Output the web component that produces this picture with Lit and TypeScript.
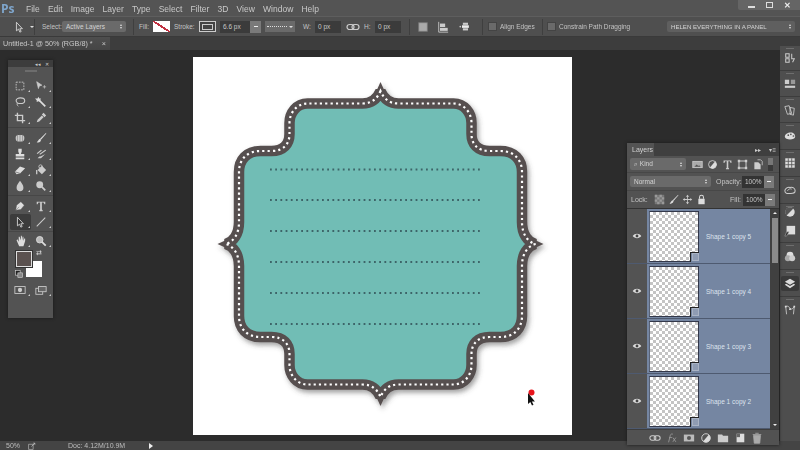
import { LitElement, html, css, svg } from "lit";
import { customElement } from "lit/decorators.js";

type Seg = number[];
const quad: Seg[] = [
  [-3, -146, -8, -140.5, -18, -140.5],
  [-37, -140.5, -56, -140.5, -73, -140.5],
  [-84, -140.5, -91, -131, -91, -121],
  [-91, -116, -91, -113, -91, -110],
  [-91, -100, -97, -93, -109, -93],
  [-113, -93, -117, -93, -120, -93],
  [-134, -93, -141.5, -84, -141.5, -72],
  [-141.5, -55, -141.5, -37, -141.5, -22],
  [-141.5, -10, -147, -2, -155, 0],
];
const start = [0, -153];
const CX = 187.5;
const CY = 187;
function shapePath(): string {
  const forward = (sx: number, sy: number) =>
    quad.map((s) => [s[0] * sx, s[1] * sy, s[2] * sx, s[3] * sy, s[4] * sx, s[5] * sy]);
  const backward = (sx: number, sy: number) => {
    const pts: number[][] = [start, ...quad.map((s) => [s[4], s[5]])];
    const out: number[][] = [];
    for (let i = quad.length - 1; i >= 0; i--) {
      const s = quad[i];
      out.push([s[2] * sx, s[3] * sy, s[0] * sx, s[1] * sy, pts[i][0] * sx, pts[i][1] * sy]);
    }
    return out;
  };
  const all = [...forward(1, 1), ...backward(1, -1), ...forward(-1, -1), ...backward(-1, 1)];
  let d = `M${CX + start[0]} ${CY + start[1]}`;
  for (const s of all) {
    d += `C${CX + s[0]} ${CY + s[1]} ${CX + s[2]} ${CY + s[3]} ${CX + s[4]} ${CY + s[5]}`;
  }
  return d + "Z";
}
const tips = [
  `M${CX - 5.5} ${CY - 150}L${CX} ${CY - 162}L${CX + 5.5} ${CY - 150}Z`,
  `M${CX - 5.5} ${CY + 150}L${CX} ${CY + 162}L${CX + 5.5} ${CY + 150}Z`,
  `M${CX - 151} ${CY - 5.5}L${CX - 163} ${CY}L${CX - 151} ${CY + 5.5}Z`,
  `M${CX + 151} ${CY - 5.5}L${CX + 163} ${CY}L${CX + 151} ${CY + 5.5}Z`,
];

const icons: Record<string, unknown> = {
  marquee: svg`<rect x="2.5" y="2.5" width="9" height="9" fill="none" stroke="#ccc" stroke-dasharray="2 1.2"/>`,
  move: svg`<path d="M2 2l6 4-3 1 -1 3zM9 8h4M11 6v4" fill="#ccc" stroke="#ccc" stroke-width=".8"/>`,
  lasso: svg`<ellipse cx="7.5" cy="5.5" rx="5" ry="3.3" fill="none" stroke="#ccc" stroke-width="1.3"/><path d="M4 8c-1 2 0 3 1 4" fill="none" stroke="#ccc"/>`,
  wand: svg`<path d="M5 5l7 7" stroke="#ddd" stroke-width="2"/><path d="M4 1l1 2 2 0-1 2 1 2-3-1-2 1 0-2-2-2 3 0z" fill="#ddd"/>`,
  crop: svg`<path d="M4 1v9h9M1 4h9v9" fill="none" stroke="#ccc" stroke-width="1.6"/>`,
  dropper: svg`<path d="M2 12l1-3 5-5 2 2-5 5zM8 3l2-2 3 3-2 2z" fill="#ccc"/>`,
  heal: svg`<rect x="2" y="3.5" width="10" height="7.5" rx="3" fill="#ccc"/><path d="M4 3v8M7 3v8M10 3v8" stroke="#777" stroke-width=".7"/>`,
  brush: svg`<path d="M13 1L6 8l1 1 6-7z" fill="#ddd"/><path d="M6 8c-2 0-2 3-4 4 3 1 5-1 5-3z" fill="#ddd"/>`,
  stamp: svg`<path d="M5 1h4v3L8 7h4v3H2V7h4L5 4zM2 11h10v2H2z" fill="#ddd"/>`,
  hbrush: svg`<path d="M12 2L5 7l1 1 7-5zM2 6l5-4 1 1-5 4zM5 10c2 0 7-3 7-3l-5 5H3z" fill="#ccc"/>`,
  eraser: svg`<path d="M1 9l6-6 6 2-6 6-4 1z" fill="#ddd"/><path d="M1 9l6 2" stroke="#777"/>`,
  bucket: svg`<path d="M3 7l5-5 5 5-5 5z" fill="#ccc"/><path d="M2 7v5" stroke="#ccc" stroke-width="1.5"/><circle cx="6.5" cy="3" r="2" fill="none" stroke="#ccc"/>`,
  drop: svg`<path d="M7 1c2 3 4 5 4 8a4 4 0 01-8 0c0-3 2-5 4-8z" fill="#ccc"/>`,
  smudge: svg`<circle cx="5.5" cy="5.5" r="4" fill="#ccc"/><path d="M8 8l4 4" stroke="#ccc" stroke-width="2"/>`,
  pen: svg`<path d="M2 12l1-6 5-4 4 4-4 5zM2 12l4-4" fill="#ddd" stroke="#555" stroke-width=".5"/>`,
  type: svg`<path d="M2 2h10v3h-1l-1-2H8v8l1 1v1H5v-1l1-1V3H4L3 5H2z" fill="#ccc"/>`,
  select: svg`<path d="M4 1.5v10l2.5-2 1.5 3.5 1.5-.7L8 9h3z" fill="#333" stroke="#ddd"/>`,
  line: svg`<path d="M2 12L12 2" stroke="#ccc" stroke-width="1.2"/>`,
  hand: svg`<path d="M3 6l3 7h5l2-6V4l-1 0-1 3V2H10v4L9 1H8v5L6.5 2H5.5v6L4 5z" fill="#ddd"/>`,
  zoom: svg`<circle cx="5.5" cy="5.5" r="3.8" fill="#bbb" stroke="#ddd"/><path d="M8 8l4.5 4.5" stroke="#ddd" stroke-width="2"/>`,
  mask: svg`<rect x="1" y="3" width="12" height="8" fill="none" stroke="#ccc"/><circle cx="7" cy="7" r="2.5" fill="#ccc"/>`,
  screen: svg`<rect x="1" y="5" width="8" height="7" fill="none" stroke="#ccc"/><rect x="4" y="3" width="9" height="6" fill="#666" stroke="#ccc"/>`,
  link: svg`<rect x="1" y="4.5" width="7" height="5" rx="2.5" fill="none" stroke="#ccc" stroke-width="1.2"/><rect x="6" y="4.5" width="7" height="5" rx="2.5" fill="none" stroke="#ccc" stroke-width="1.2"/>`,
  fx: svg`<path d="M3 12l2-8c.3-1.5 1.5-2 3-1.5M3.5 6.5H7M8 6.5l3.5 5M11.5 6.5L8 11.5" fill="none" stroke="#999"/>`,
  addmask: svg`<rect x="1" y="3" width="12" height="8" fill="#bbb"/><circle cx="7" cy="7" r="2.4" fill="#555"/>`,
  adjust: svg`<circle cx="7" cy="7" r="5" fill="#555" stroke="#ddd"/><path d="M7 2a5 5 0 010 10z" fill="#ddd" transform="rotate(40 7 7)"/>`,
  folder: svg`<path d="M1 3h5l1 1.5h6V12H1z" fill="#ccc"/>`,
  newl: svg`<path d="M3 2h9v10H3z" fill="#ddd"/><path d="M3 2h4v4H3z" fill="#666"/>`,
  trash: svg`<path d="M3 4h8l-.8 9H3.8zM2 3h10M5 1.5h4" fill="#aaa" stroke="#aaa"/>`,
  eye: svg`<path d="M1 7c3-4 9-4 12 0-3 4-9 4-12 0z" fill="#ddd"/><circle cx="7" cy="7" r="2" fill="#444"/>`,
  filterimg: svg`<rect x="1" y="3" width="12" height="8" fill="#aaa" stroke="#ccc"/><path d="M3 10l3-3 2 2 1-1 2 2z" fill="#555"/>`,
  t: svg`<path d="M2 2h10v3h-1l-1-2H8v8l1 1v1H5v-1l1-1V3H4L3 5H2z" fill="#ccc"/>`,
  frame: svg`<path d="M2.5 2.5h9v9h-9z" fill="none" stroke="#ccc" stroke-width="1.3"/><path d="M1 1h3v3H1zM10 1h3v3h-3zM1 10h3v3H1zM10 10h3v3h-3z" fill="#ccc"/>`,
  smart: svg`<path d="M3 4h5l3 3v6H3z" fill="#ccc"/><path d="M7 1h4l2 2v5" fill="none" stroke="#ccc"/>`,
  checker: svg`<rect x="1" y="1" width="12" height="12" fill="#777"/><path d="M1 1h3v3H1zM7 1h3v3H7zM4 4h3v3H4zM10 4h3v3h-3zM1 7h3v3H1zM7 7h3v3H7zM4 10h3v3H4zM10 10h3v3h-3z" fill="#999"/>`,
  arrows: svg`<path d="M7 1l2 2.5H5zM7 13l-2-2.5h4zM1 7l2.5-2v4zM13 7l-2.5 2V5zM6.5 3h1v8h-1zM3 6.5h8v1H3z" fill="#ccc"/>`,
  lock: svg`<rect x="3" y="6" width="8" height="7" fill="#ddd"/><path d="M4.5 6V4a2.5 2.5 0 015 0v2" fill="none" stroke="#ddd" stroke-width="1.3"/>`,
  align1: svg`<rect x="2" y="2" width="10" height="10" fill="#aaa" stroke="#777"/>`,
  align2: svg`<path d="M2 1v12h11" fill="none" stroke="#ccc"/><rect x="3.5" y="3" width="6" height="4" fill="#ccc"/><rect x="3.5" y="8" width="9" height="3.5" fill="#ccc"/>`,
  arrange: svg`<rect x="4.5" y="2" width="6" height="2.5" fill="#ccc"/><rect x="3.5" y="5" width="8" height="3" fill="#eee"/><rect x="4.5" y="8.5" width="6" height="2.5" fill="#ccc"/><circle cx="1.5" cy="6.5" r="1" fill="#ccc"/>`,
  history: svg`<path d="M2 2h4v4H2zM2 8h4v4H2zM9 2v6h3l-2 4" fill="none" stroke="#ccc" stroke-width="1.2"/>`,
  actions: svg`<rect x="1" y="2" width="5" height="5" fill="#ccc"/><rect x="8" y="2" width="5" height="5" fill="#999"/><rect x="1" y="9" width="12" height="2.5" fill="#ccc"/>`,
  cards: svg`<path d="M1 3l5-1 3 9-5 1z M7 4l5 1-1 8-4-1z" fill="none" stroke="#ccc"/>`,
  palette: svg`<path d="M1 8c0-3 3-5 7-5s5 3 5 5-3 3-6 3-6-1-6-3z" fill="#ddd"/><circle cx="5" cy="6" r="1" fill="#555"/><circle cx="8" cy="5" r="1" fill="#555"/><circle cx="11" cy="7" r="1" fill="#555"/>`,
  grid: svg`<rect x="1.5" y="1.5" width="11" height="11" fill="#ddd"/><path d="M5 1.5v11M9 1.5v11M1.5 5h11M1.5 9h11" stroke="#555"/>`,
  cloud: svg`<path d="M1 8c0-3 4-5 6-4 3-1 6 1 6 4s-2 3-5 3-7 1-7-3z" fill="none" stroke="#ccc" stroke-width="1.2"/><path d="M4 8c1-2 3-3 5-2" fill="none" stroke="#ccc"/>`,
  halfc: svg`<circle cx="7" cy="7" r="5.5" fill="#ddd"/><path d="M3 11A5.5 5.5 0 0111 3z" fill="#555"/>`,
  style: svg`<rect x="3" y="1" width="10" height="10" fill="#ddd"/><path d="M1 13l2-5h3l-3 5z" fill="#333" stroke="#ccc" stroke-width=".5"/>`,
  venn: svg`<circle cx="7" cy="6" r="4" fill="#ddd"/><circle cx="4.5" cy="9.5" r="3.5" fill="#aaa"/><circle cx="9.5" cy="9.5" r="3.5" fill="#ccc"/>`,
  layers: svg`<path d="M7 2l6 3.5L7 9 1 5.5z" fill="#ddd"/><path d="M2.5 8L7 10.5 11.5 8l1.5 1L7 13 1 9z" fill="#ddd"/>`,
  paths: svg`<path d="M2 3c5-3 5 8 10 0M2 3l1 9M12 3l-1 9" fill="none" stroke="#ccc"/><rect x="1" y="2" width="2" height="2" fill="#ddd"/><rect x="11" y="2" width="2" height="2" fill="#ddd"/><rect x="6" y="5" width="2" height="2" fill="#ddd"/>`,
  pointer: svg`<path d="M4 1.5v10l2.5-2 1.5 3.5 1.5-.7L8 9h3z" fill="#555" stroke="#ddd"/>`,
};
const ic = (n: string) => html`<svg class="ic" viewBox="0 0 14 14">${icons[n]}</svg>`;

const menus = ["File", "Edit", "Image", "Layer", "Type", "Select", "Filter", "3D", "View", "Window", "Help"];
const toolGroups = [
  { items: ["marquee", "move", "lasso", "wand", "crop", "dropper"], cls: "first" },
  { items: ["heal", "brush", "stamp", "hbrush", "eraser", "bucket", "drop", "smudge"], cls: "" },
  { items: ["pen", "type", "select", "line"], cls: "" },
  { items: ["hand", "zoom"], cls: "last" },
];
const dock: [string, number, boolean?][] = [
  ["history", 25], ["actions", 26], ["cards", 26], ["palette", 27], ["grid", 27],
  ["cloud", 27], ["halfc", 17], ["style", 22], ["venn", 27], ["layers", 27, true], ["paths", 27],
];
const layers = ["Shape 1 copy 5", "Shape 1 copy 4", "Shape 1 copy 3", "Shape 1 copy 2"];
const lineYs = [112.5, 143, 174, 205, 236, 267];

@customElement("app-root")
export class AppRoot extends LitElement {
  static styles = css`
    :host { display: block; width: 800px; height: 450px; overflow: hidden; font-family: "Liberation Sans", Arial, sans-serif; color: #c4c4c4; background: #2c2c2c; }
    * { box-sizing: border-box; }
    .app { width: 800px; height: 450px; display: grid; grid-template-rows: 16px 21px 13px 1fr 9px; filter: blur(.45px); }
    .ic { width: 12px; height: 12px; display: block; flex: none; }

    .menubar { display: flex; align-items: center; background: #545454; position: relative; padding-top: 1px; }
    .ps { width: 24px; padding-left: 1px; font: bold 12px "Open Sans", sans-serif; color: #7fa6cc; }
    .menus { display: flex; gap: 8.2px; font-size: 8.5px; color: #c8c8c8; padding-left: 2px; }
    .winbtns { position: absolute; right: 0; top: 0; width: 62px; height: 10px; background: #656565; display: flex; align-items: center; justify-content: space-around; padding: 0 4px; border-radius: 0 0 0 2px; }
    .wmin { width: 7px; height: 2px; background: #ddd; margin-top: 3px; }
    .wres { width: 7px; height: 6px; border: 1.2px solid #ddd; }
    .wx { font: bold 8px "Liberation Sans", sans-serif; color: #eee; }

    .options { display: flex; align-items: center; background: #4f4f4f; border-top: 1px solid #5e5e5e; border-bottom: 1px solid #3a3a3a; font-size: 6.5px; color: #c4c4c4; padding-left: 13px; }
    .opt-tool { display: flex; width: 21px; align-items: center; gap: 5px; flex: none; }
    .caret { width: 0; height: 0; border-left: 2px solid transparent; border-right: 2px solid transparent; border-top: 2.5px solid #ddd; flex: none; }
    .sep { width: 1px; height: 16px; background: #3f3f3f; flex: none; }
    .select { height: 11px; background: #6a6a6a; border-radius: 2px; display: flex; align-items: center; justify-content: space-between; padding: 0 4px; font-size: 6.5px; color: #d4d4d4; flex: none; white-space: nowrap; }
    .updown { display: flex; flex-direction: column; gap: 1px; }
    .updown i { display: block; width: 0; height: 0; border-left: 1.5px solid transparent; border-right: 1.5px solid transparent; }
    .updown i:first-child { border-bottom: 2px solid #ddd; }
    .updown i:last-child { border-top: 2px solid #ddd; }
    .lb { flex: none; white-space: nowrap; }
    .s1 { width: 64px; margin-left: 1px; }
    .m3 { margin-left: 3px; } .m4 { margin-left: 4px; } .m5 { margin-left: 5px; }
    .m7 { margin-left: 7px; } .m8 { margin-left: 8px; } .m9 { margin-left: 9px; } .m10 { margin-left: 10px; } .m11 { margin-left: 11px; }
    .w19 { width: 19px; } .w10 { width: 10px; } .w21 { width: 21px; } .w7 { width: 7px; } .w33 { width: 33px; }
    .fill { width: 17px; height: 11px; background: linear-gradient(to top right, #fff 45%, #c03040 45%, #c03040 55%, #fff 55%); flex: none; }
    .stroke { width: 17px; height: 11px; border: 1px solid #ccc; background: #444; display: grid; place-items: center; flex: none; }
    .stroke i { display: block; width: 11px; height: 6px; border: 1.2px solid #ccc; }
    .input { background: #3b3b3b; height: 12px; display: flex; align-items: center; padding-left: 3px; font-size: 6.5px; color: #c8c8c8; flex: none; }
    .i-stroke { width: 30px; }
    .i-wh { width: 26px; }
    .minus { width: 11px; height: 12px; background: #7a7a7a; display: grid; place-items: center; flex: none; }
    .minus i { display: block; width: 4px; height: 1px; background: #eee; }
    .dash { width: 30px; height: 11px; background: #6a6a6a; display: flex; align-items: center; gap: 2px; padding: 0 2px; flex: none; }
    .dash b { flex: 1; border-top: 1px dotted #ddd; }
    .box { width: 9px; height: 9px; background: #6a6a6a; border: 1px solid #444; flex: none; }
    .grow { flex: 1; }
    .preset { width: 128px; margin-right: 5px; font-size: 6.1px; background: #5f5f5f; }
    .w-link { width: 14px; height: 14px; }

    .tabs { background: #3d3d3d; display: flex; }
    .tab { width: 110px; background: linear-gradient(#4e4e4e, #454545); font-size: 7.2px; display: flex; align-items: center; justify-content: space-between; padding: 0 4px 0 3px; color: #c8c8c8; }

    .work { position: relative; background: #2c2c2c; }
    .canvas { position: absolute; left: 193px; top: 7px; width: 379px; height: 378px; background: #fff; }
    .canvas svg { display: block; width: 379px; height: 378px; overflow: visible; }

    .tools { position: absolute; left: 8px; top: 10px; width: 45px; height: 258px; background: #535353; box-shadow: 0 0 3px #1a1a1a; display: flex; flex-direction: column; }
    .thead { height: 7px; background: #3c3c3c; display: flex; justify-content: flex-end; align-items: center; gap: 4px; padding-right: 4px; font-size: 5px; color: #ccc; flex: none; }
    .grip { width: 12px; height: 2px; background: #6d6d6d; align-self: center; margin: 3px 0 0; flex: none; }
    .tgrid { display: grid; grid-template-columns: 21px 21px; grid-auto-rows: 16px; padding: 2px 1px 1px 1px; border-bottom: 1px solid #474747; justify-content: center; flex: none; }
    .tgrid.first { margin-top: 6px; padding-top: 0; }
    .tgrid.last { border-bottom: 0; padding-top: 1px; }
    .tool { position: relative; display: grid; place-items: center; }
    .tool::after { content: ""; position: absolute; right: 1px; bottom: 2px; border-left: 2px solid transparent; border-bottom: 2px solid #ccc; }
    .tool.active { background: #3c3c3c; border-radius: 2px; }
    .swatches { position: relative; height: 31px; margin-top: 1px; flex: none; }
    .fg { position: absolute; left: 8px; top: 0; width: 16px; height: 16px; background: #5b5250; border: 1px solid #ddd; box-shadow: 0 0 0 1px #333; z-index: 1; }
    .bg { position: absolute; left: 18px; top: 10px; width: 16px; height: 16px; background: #fff; }
    .sw-small { position: absolute; left: 7px; top: 19px; width: 8px; height: 8px; }
    .sw-arrow { position: absolute; left: 28px; top: -2px; font: 7px "DejaVu Sans", sans-serif; color: #ddd; }
    .maskrow { display: grid; grid-template-columns: 21px 21px; justify-content: center; height: 16px; flex: none; }

    .dock { position: absolute; left: 780px; top: -5px; width: 20px; height: 396px; background: #4e4e4e; display: flex; flex-direction: column; }
    .dgroup { border-top: 1px solid #3d3d3d; display: flex; align-items: center; justify-content: center; flex: none; position: relative; }
    .dgroup::before { content: ""; position: absolute; left: 6px; right: 6px; top: 2px; height: 1px; background: #6e6e6e; }
    .dgroup.nohead { border-top: 0; }
    .dgroup.nohead::before { display: none; }
    .dgroup.active span { background: #3a3a3a; border-radius: 2px; width: 18px; height: 15px; display: grid; place-items: center; }

    .layers { position: absolute; left: 627px; top: 93px; width: 152px; height: 302px; background: #525252; box-shadow: 0 0 3px #1a1a1a; display: flex; flex-direction: column; font-size: 7px; }
    .ltabs { height: 13px; background: #3f3f3f; display: flex; justify-content: space-between; align-items: stretch; flex: none; }
    .ltab { background: #535353; width: 27px; padding-left: 5px; font-size: 7px; color: #d0d0d0; display: flex; align-items: center; }
    .lmenu { display: flex; align-items: center; gap: 8px; padding-right: 3px; font-size: 6px; color: #ccc; }
    .lrow { display: flex; align-items: center; padding-left: 3px; flex: none; }
    .r-kind { height: 17px; border-bottom: 1px solid #474747; }
    .r-mode { height: 18px; border-bottom: 1px solid #474747; }
    .r-lock { height: 18px; border-bottom: 1px solid #333; }
    .k-sel { width: 56px; height: 12px; }
    .k-icons { display: flex; gap: 4px; margin-left: 6px; }
    .k-icons .ic { width: 11px; height: 11px; }
    .mini { width: 5px; height: 13px; margin-left: 5px; background: linear-gradient(#777 50%, #3a3a3a 50%); flex: none; }
    .n-sel { width: 81px; height: 11px; }
    .op-l { margin-left: 5px; width: 26px; flex: none; }
    .op-i { width: 22px; height: 12px; font-size: 6.5px; background: #333; }
    .op-m { width: 10px; }
    .lock-l { width: 24px; padding-left: 1px; flex: none; }
    .lock-i { display: flex; gap: 3px; }
    .lock-i .ic { width: 11px; height: 11px; }
    .fill-l { margin-left: auto; width: 13px; flex: none; }
    .r-lock .op-m { margin-right: 4px; }

    .list { height: 220px; display: grid; grid-template-columns: 1fr 9px; flex: none; }
    .rows { display: flex; flex-direction: column; }
    .lyr { height: 55px; display: grid; grid-template-columns: 20px 1fr; flex: none; border-bottom: 1.5px solid #4e5a70; }
    .eye { display: grid; place-items: center; background: #535353; }
    .eye .ic { width: 10px; height: 10px; }
    .lbody { background: #7586a2; display: flex; align-items: center; gap: 7px; padding-left: 2px; color: #dde4ee; font-size: 6.5px; }
    .thumb { position: relative; width: 50px; height: 51px; flex: none; background-color: #fff; background-image: conic-gradient(#c4c4c4 25%, #fff 25% 50%, #c4c4c4 50% 75%, #fff 75%); background-size: 6px 6px; border: 1px solid #33384a; border-left-color: #5a6478; }
    .notch { position: absolute; right: -1px; bottom: -1px; width: 9px; height: 10px; background: #7586a2; border-left: 1px solid #222; border-top: 1px solid #222; display: grid; place-items: center; }
    .notch i { display: block; width: 5px; height: 6px; background: #8f9cb3; outline: 1px solid #a9b3c4; }
    .scroll { background: #404040; display: flex; flex-direction: column; align-items: center; padding: 3px 0; }
    .sthumb { width: 6px; height: 45px; margin-top: 4px; margin-bottom: auto; background: #8a8a8a; }
    .tri-u { border-left: 2px solid transparent; border-right: 2px solid transparent; border-bottom: 2px solid #eee; }
    .tri-d { border-left: 2px solid transparent; border-right: 2px solid transparent; border-top: 2px solid #eee; }
    .lfoot { height: 16px; display: flex; align-items: center; gap: 5px; padding-left: 22px; flex: none; border-top: 1px solid #3d3d3d; }

    .status { background: #444; display: flex; align-items: center; font-size: 7px; color: #bdbdbd; padding-left: 6px; }
    .st-pct { width: 22px; flex: none; }
    .st-ic { width: 8px; height: 8px; flex: none; }
    .doc { margin-left: 32px; width: 81px; flex: none; }
    .st-play { border-left: 4px solid #eee; border-top: 3px solid transparent; border-bottom: 3px solid transparent; }
  `;

  render() {
    const d = shapePath();
    return html`<div class="app">
      <div class="menubar">
        <div class="ps">Ps</div>
        <div class="menus">${menus.map((m) => html`<span>${m}</span>`)}</div>
        <div class="winbtns"><i class="wmin"></i><i class="wres"></i><span class="wx">✕</span></div>
      </div>
      <div class="options">
        <div class="opt-tool">${ic("pointer")}<i class="caret"></i></div>
        <div class="sep"></div>
        <span class="lb m7 w19">Select:</span>
        <div class="select s1"><span>Active Layers</span><span class="updown"><i></i><i></i></span></div>
        <div class="sep m7"></div>
        <span class="lb m5 w10">Fill:</span><div class="fill m4"></div>
        <span class="lb m4 w21">Stroke:</span><div class="stroke m4"><i></i></div>
        <div class="input i-stroke m4">6.6 px</div><div class="minus"><i></i></div>
        <div class="dash m4"><b></b><i class="caret"></i></div>
        <span class="lb m8 w7">W:</span><div class="input i-wh m5">0 px</div>
        <svg class="ic w-link m5" viewBox="0 0 14 14">${icons.link}</svg>
        <span class="lb m4 w7">H:</span><div class="input i-wh m4">0 px</div>
        <div class="sep m8"></div>
        <div class="m7">${ic("align1")}</div>
        <div class="m8">${ic("align2")}</div>
        <div class="m10">${ic("arrange")}</div>
        <div class="sep m11"></div>
        <div class="box m5"></div><span class="lb m3 w33">Align Edges</span>
        <div class="sep m9"></div>
        <div class="box m4"></div><span class="lb m3">Constrain Path Dragging</span>
        <div class="grow"></div>
        <div class="select preset"><span>HELEN EVERYTHING IN A PANEL</span><span class="updown"><i></i><i></i></span></div>
      </div>
      <div class="tabs"><div class="tab"><span>Untitled-1 @ 50% (RGB/8) *</span><span>×</span></div></div>
      <div class="work">
        <div class="canvas">
          <svg viewBox="0 0 379 378">
            <defs>
              <filter id="ds" x="-10%" y="-10%" width="125%" height="125%">
                <feDropShadow dx="2" dy="3" stdDeviation="2.8" flood-color="#444" flood-opacity=".5"></feDropShadow>
              </filter>
            </defs>
            <g filter="url(#ds)">
              ${tips.map((t) => svg`<path d=${t} fill="#574f4f"></path>`)}
              <path d=${d} fill="#71bdb5" stroke="#574f4f" stroke-width="10.5" stroke-linejoin="bevel"></path>
            </g>
            <path d=${d} fill="none" stroke="#fff" stroke-width="2.2" stroke-dasharray="2.2 3.1"></path>
            ${lineYs.map((y) => svg`<path d="M77 ${y}H287" stroke="#3d6468" stroke-width="1.8" stroke-dasharray="1.8 3.4"></path>`)}
            <circle cx="338.5" cy="335.5" r="3" fill="#e8141c"></circle>
            <path d="M335 336v11l2.3-2 1.7 3.5 1.5-.8-1.6-3.3h3z" fill="#111"></path>
          </svg>
        </div>

        <div class="tools">
          <div class="thead"><span>◂◂</span><span>✕</span></div>
          <div class="grip"></div>
          ${toolGroups.map((g) => html`<div class="tgrid ${g.cls}">
            ${g.items.map((t) => html`<div class="tool ${t === "select" ? "active" : ""}">${ic(t)}</div>`)}
          </div>`)}
          <div class="swatches">
            <div class="fg"></div><div class="bg"></div>
            <svg class="sw-small" viewBox="0 0 14 14"><rect x="1" y="1" width="8" height="8" fill="#222" stroke="#ddd"></rect><rect x="5" y="5" width="8" height="8" fill="#888" stroke="#ddd"></rect></svg>
            <span class="sw-arrow">⇄</span>
          </div>
          <div class="maskrow"><div class="tool">${ic("mask")}</div><div class="tool">${ic("screen")}</div></div>
        </div>

        <div class="dock">
          ${dock.map(([n, h, a]) => html`<div class="dgroup ${a ? "active" : ""} ${n === "style" ? "nohead" : ""}" style="height:${h}px"><span>${ic(n)}</span></div>`)}
        </div>

        <div class="layers">
          <div class="ltabs"><div class="ltab">Layers</div><div class="lmenu"><span>▸▸</span><span>▾≡</span></div></div>
          <div class="lrow r-kind">
            <div class="select k-sel"><span>⌕ Kind</span><span class="updown"><i></i><i></i></span></div>
            <div class="k-icons">${["filterimg", "adjust", "t", "frame", "smart"].map((n) => ic(n))}</div>
            <div class="mini"></div>
          </div>
          <div class="lrow r-mode">
            <div class="select n-sel"><span>Normal</span><span class="updown"><i></i><i></i></span></div>
            <span class="op-l">Opacity:</span>
            <div class="input op-i">100%</div><div class="minus op-m"><i></i></div>
          </div>
          <div class="lrow r-lock">
            <span class="lock-l">Lock:</span>
            <div class="lock-i">${["checker", "brush", "arrows", "lock"].map((n) => ic(n))}</div>
            <span class="fill-l">Fill:</span>
            <div class="input op-i">100%</div><div class="minus op-m"><i></i></div>
          </div>
          <div class="list">
            <div class="rows">
              ${layers.map((l) => html`<div class="lyr">
                <div class="eye">${ic("eye")}</div>
                <div class="lbody"><div class="thumb"><div class="notch"><i></i></div></div><span>${l}</span></div>
              </div>`)}
            </div>
            <div class="scroll"><i class="tri-u"></i><div class="sthumb"></div><i class="tri-d"></i></div>
          </div>
          <div class="lfoot">${["link", "fx", "addmask", "adjust", "folder", "newl", "trash"].map((n) => ic(n))}</div>
        </div>
      </div>
      <div class="status">
        <span class="st-pct">50%</span>
        <svg class="st-ic" viewBox="0 0 14 14"><path d="M1 4h8v9H1z" fill="none" stroke="#ccc"></path><path d="M6 8l6-6M9 2h3v3" fill="none" stroke="#ddd"></path></svg>
        <span class="doc">Doc: 4.12M/10.9M</span>
        <i class="st-play"></i>
      </div>
    </div>`;
  }
}
